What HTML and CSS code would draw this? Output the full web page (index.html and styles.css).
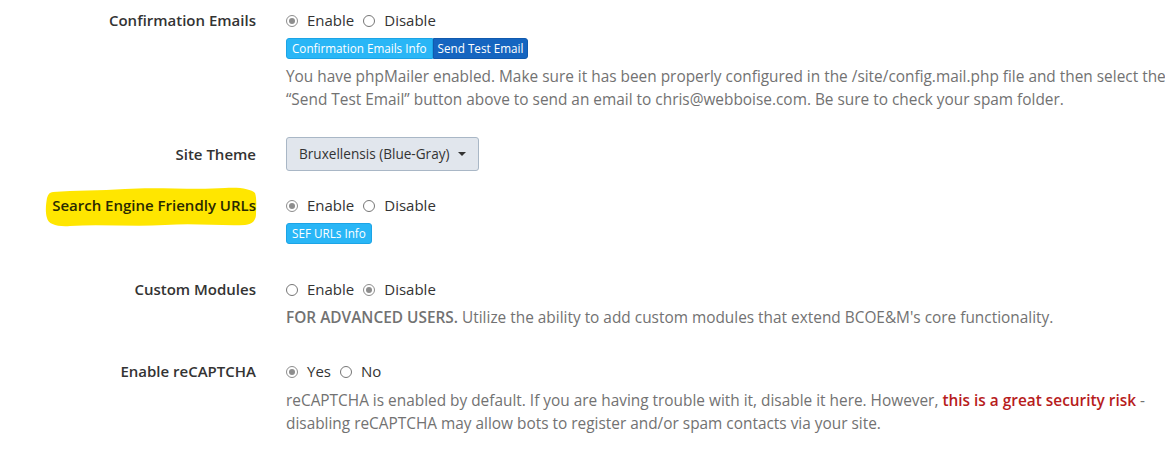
FILE: index.html
```html
<!DOCTYPE html>
<html>
<head>
<meta charset="utf-8">
<link rel="stylesheet" href="styles.css">
</head>
<body>
<div class="form">
  <div class="row row-confirm">
    <div class="label">Confirmation Emails</div>
    <div class="ctrl">
      <div class="radios">
        <span class="radio checked"></span><span class="opt">Enable</span>
        <span class="radio"></span><span class="opt">Disable</span>
      </div>
      <div class="btn-group">
        <span class="btn btn-info">Confirmation Emails Info</span><span class="btn btn-primary">Send Test Email</span>
      </div>
      <p class="help">You have phpMailer enabled. Make sure it has been properly configured in the /site/config.mail.php file and then select the “Send Test Email” button above to send an email to chris@webboise.com. Be sure to check your spam folder.</p>
    </div>
  </div>

  <div class="row row-theme">
    <div class="label label-mid">Site Theme</div>
    <div class="ctrl">
      <div class="select">Bruxellensis (Blue-Gray)<span class="caret"></span></div>
    </div>
  </div>

  <div class="row row-sef">
    <div class="label"><span class="hl">
      <svg class="hl-mark" viewBox="0 0 212 40" preserveAspectRatio="none"><path d="M8 5 C 30 3, 55 4, 80 2 C 110 0, 150 3, 180 1 C 195 0, 206 2, 210 6 C 212 12, 211 20, 211 27 C 211 33, 208 37, 200 38 C 175 39, 150 36, 120 38 C 90 40, 55 37, 25 39 C 12 40, 3 37, 2 31 C 0 25, 1 17, 2 11 C 3 7, 5 5, 8 5 Z" fill="#ffe600"/></svg>
      <span class="hl-text">Search Engine Friendly URLs</span></span></div>
    <div class="ctrl">
      <div class="radios">
        <span class="radio checked"></span><span class="opt">Enable</span>
        <span class="radio"></span><span class="opt">Disable</span>
      </div>
      <div class="btn-group">
        <span class="btn btn-info btn-single">SEF URLs Info</span>
      </div>
    </div>
  </div>

  <div class="row row-modules">
    <div class="label">Custom Modules</div>
    <div class="ctrl">
      <div class="radios">
        <span class="radio"></span><span class="opt">Enable</span>
        <span class="radio checked"></span><span class="opt">Disable</span>
      </div>
      <p class="help help-tight"><strong>FOR ADVANCED USERS.</strong> Utilize the ability to add custom modules that extend BCOE&amp;M's core functionality.</p>
    </div>
  </div>

  <div class="row row-captcha">
    <div class="label">Enable reCAPTCHA</div>
    <div class="ctrl">
      <div class="radios">
        <span class="radio checked"></span><span class="opt">Yes</span>
        <span class="radio"></span><span class="opt">No</span>
      </div>
      <p class="help">reCAPTCHA is enabled by default. If you are having trouble with it, disable it here. However, <strong class="danger">this is a great security risk</strong> - disabling reCAPTCHA may allow bots to register and/or spam contacts via your site.</p>
    </div>
  </div>
</div>
</body>
</html>
```

FILE: styles.css
```css
html, body {
  margin: 0;
  padding: 0;
  background: #ffffff;
}
body {
  font-family: "Open Sans", "Noto Sans", sans-serif;
  font-size: 15px;
  line-height: 23px;
  color: #333333;
  overflow: hidden;
}
.form {
  padding-top: 9px;
  width: 1300px;
}
.row {
  display: grid;
  grid-template-columns: 256px 1fr;
  column-gap: 30px;
}
.row-confirm { margin-bottom: 26px; }
.row-theme { margin-bottom: 23px; }
.row-sef { margin-bottom: 34px; }
.row-modules { margin-bottom: 31px; }

.label {
  text-align: right;
  font-weight: 600;
  color: #333333;
  white-space: nowrap;
}
.label-mid {
  line-height: 34px;
}
.ctrl {
  display: flex;
  flex-direction: column;
  align-items: flex-start;
}
.radios {
  display: flex;
  align-items: center;
  height: 23px;
}
.radio {
  box-sizing: border-box;
  width: 12px;
  height: 12px;
  border: 1px solid #767676;
  border-radius: 50%;
  margin-right: 9px;
  margin-top: 1px;
  background: #fff;
  position: relative;
}
.radio.checked {
  border-color: #8d8d8d;
}
.radio.checked::after {
  content: "";
  position: absolute;
  left: 2px;
  top: 2px;
  width: 6px;
  height: 6px;
  border-radius: 50%;
  background: #8d8d8d;
}
.opt {
  margin-right: 9px;
  color: #333;
}
.btn-group {
  display: flex;
  margin-top: 6px;
}
.btn {
  font-size: 11.7px;
  line-height: 19px;
  padding: 0 5px;
  color: #fff;
  border: 1px solid transparent;
}
.btn-primary {
  padding: 0 4px;
}
.btn-info {
  background: #29b6f6;
  border-color: #1ca4e6;
  border-radius: 3px 0 0 3px;
}
.btn-single {
  border-radius: 3px;
}
.btn-primary {
  background: #1565c0;
  border-color: #115aae;
  border-radius: 0 3px 3px 0;
}
.help {
  margin: 6px 0 0 0;
  color: #727272;
  width: 900px;
  font-size: 15.4px;
}
.help-tight {
  margin-top: 5px;
}
.help strong {
  font-weight: 600;
}
.help .danger {
  color: #b71c1c;
}
.select {
  box-sizing: border-box;
  width: 193px;
  height: 34px;
  background: #e1e6ed;
  border: 1px solid #a9b7c6;
  border-radius: 3px;
  font-size: 13.6px;
  line-height: 32px;
  padding-left: 12px;
  color: #333;
  position: relative;
}
.caret {
  position: absolute;
  right: 12px;
  top: 14px;
  width: 0;
  height: 0;
  border-left: 4px solid transparent;
  border-right: 4px solid transparent;
  border-top: 4px solid #333;
}
.hl {
  position: relative;
  display: inline-block;
}
.hl-mark {
  position: absolute;
  left: -7px;
  top: -7px;
  width: 212px;
  height: 40px;
  z-index: 0;
}
.hl-text {
  position: relative;
  z-index: 1;
  color: #2a2a00;
}
```
